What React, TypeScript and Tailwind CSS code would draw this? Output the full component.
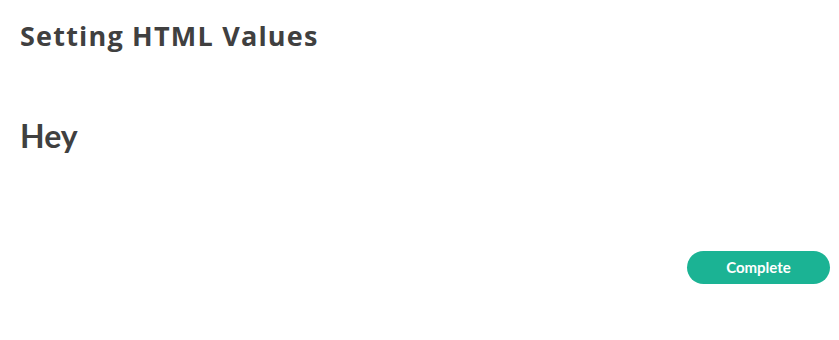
export default function App() {
  return (
    <main className="w-[839px] h-[340px] bg-white pl-5 pr-[9px] pt-[17px] font-['Lato','Open_Sans',sans-serif] text-[#404040]">
      <h1 className="font-['Open_Sans',sans-serif] text-[27px] leading-[38px] font-bold tracking-[1.2px]">
        Setting HTML Values
      </h1>

      <div className="mt-[61px]">
        <h2 className="text-[32px] leading-[40px] font-bold">Hey</h2>
      </div>

      <div className="mt-[95px] flex justify-end">
        <button className="h-[33px] w-[143px] rounded-full bg-[#1bb394] text-[15px] font-bold text-white">
          Complete
        </button>
      </div>
    </main>
  );
}
